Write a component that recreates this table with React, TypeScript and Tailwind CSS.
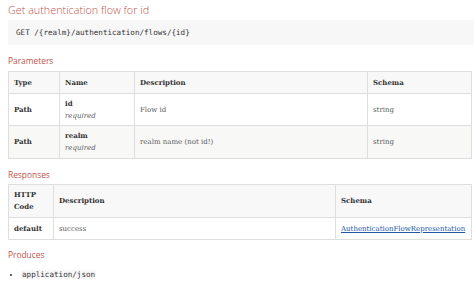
import React from 'react';

const serif = "font-['DejaVu_Serif',serif]";
const heading = "font-['Open_Sans',sans-serif] text-[#c0544a]";
const mono = "font-['DejaVu_Sans_Mono',monospace]";

const Th: React.FC<{ w: string; children?: React.ReactNode }> = ({ w, children }) => (
  <th className={`${w} border border-[#dedede] px-[5px] text-left align-middle font-bold text-[#333]`}>{children}</th>
);

const Td: React.FC<{ bold?: boolean; children?: React.ReactNode }> = ({ bold, children }) => (
  <td
    className={`border border-[#dedede] px-[5px] align-middle ${bold ? 'font-bold text-[#333]' : 'text-[#5a5a5a]'}`}
  >
    {children}
  </td>
);

const params = [
  { type: 'Path', name: 'id', desc: 'Flow id', schema: 'string' },
  { type: 'Path', name: 'realm', desc: 'realm name (not id!)', schema: 'string' },
];

export default function App() {
  return (
    <div className="h-[282px] w-[474px] overflow-hidden bg-white pl-2">
      <h2 className={`${heading} h-[20px] text-[10.8px] font-light leading-[20px]`}>Get authentication flow for id</h2>

      <div className="flex h-[25px] items-center bg-[#f7f7f8] px-2">
        <span className={`${mono} text-[7.6px] text-[#333]`}>GET /{'{realm}'}/authentication/flows/{'{id}'}</span>
      </div>

      <h3 className={`${heading} mt-[7px] h-[18px] text-[8.4px] leading-[18px]`}>Parameters</h3>
      <table className={`${serif} mt-px w-[463px] table-fixed border-collapse text-[7px] leading-[12px]`}>
        <thead>
          <tr className="h-[22px] bg-[#f7f8f7]">
            <Th w="w-[51px]">Type</Th>
            <Th w="w-[75px]">Name</Th>
            <Th w="w-[233px]">Description</Th>
            <Th w="w-[104px]">Schema</Th>
          </tr>
        </thead>
        <tbody>
          {params.map((p, i) => (
            <tr key={p.name} className={i % 2 ? 'h-[33px] bg-[#f8f8f7]' : 'h-[32px] bg-white'}>
              <Td bold>{p.type}</Td>
              <td className="border border-[#dedede] px-[5px] align-middle">
                <div className="font-bold text-[#333]">{p.name}</div>
                <div className="italic text-[#5a5a5a]">required</div>
              </td>
              <Td>{p.desc}</Td>
              <Td>{p.schema}</Td>
            </tr>
          ))}
        </tbody>
      </table>

      <h3 className={`${heading} mt-[7px] h-[18px] text-[8.4px] leading-[18px]`}>Responses</h3>
      <table className={`${serif} w-[463px] table-fixed border-collapse text-[7px] leading-[12px]`}>
        <thead>
          <tr className="h-[33px] bg-[#f7f8f7]">
            <Th w="w-[45px]">
              HTTP
              <br />
              Code
            </Th>
            <Th w="w-[282px]">Description</Th>
            <Th w="w-[136px]">Schema</Th>
          </tr>
        </thead>
        <tbody>
          <tr className="h-[22px] bg-white">
            <Td bold>default</Td>
            <Td>success</Td>
            <td className="border border-[#dedede] px-[5px] align-middle">
              <a href="#" className="text-[#2156a5] underline">AuthenticationFlowRepresentation</a>
            </td>
          </tr>
        </tbody>
      </table>

      <h3 className={`${heading} mt-[6px] h-[18px] text-[8.4px] leading-[18px]`}>Produces</h3>
      <ul className="list-disc pl-[13px] text-[#333] marker:text-[7px]">
        <li className="h-[14px] leading-[14px]">
          <code className={`${mono} bg-[#f7f7f8] px-px text-[7.6px]`}>application/json</code>
        </li>
      </ul>
    </div>
  );
}
